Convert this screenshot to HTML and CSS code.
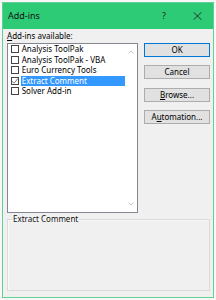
FILE: index.html
```html
<!DOCTYPE html>
<html>
<head>
<meta charset="utf-8">
<link rel="stylesheet" href="styles.css">
</head>
<body>
<div class="dialog">
  <div class="titlebar">
    <span class="title">Add-ins</span>
    <span class="help">?</span>
    <svg class="close" width="9" height="8" viewBox="0 0 9 8"><path d="M0.5 0.2L8.5 7.8M8.5 0.2L0.5 7.8" stroke="#222" stroke-width="0.9" fill="none"/></svg>
  </div>
  <div class="content">
    <div class="top">
      <div class="label"><u>A</u>dd-ins available:</div>
      <div class="listbox">
        <div class="rows">
          <div class="row"><span class="cb"></span><span class="name">Analysis ToolPak</span></div>
          <div class="row"><span class="cb"></span><span class="name">Analysis ToolPak - VBA</span></div>
          <div class="row"><span class="cb"></span><span class="name">Euro Currency Tools</span></div>
          <div class="row"><span class="cb checked"><svg width="8" height="8" viewBox="0 0 8 8"><path d="M1 4.2L3 6.2L7.2 1.2" stroke="#6e6e6e" stroke-width="0.9" fill="none"/></svg></span><span class="name selected">Extract Comment</span></div>
          <div class="row"><span class="cb"></span><span class="name">Solver Add-in</span></div>
        </div>
        <div class="scroll">
          <svg width="6" height="4" viewBox="0 0 6 4"><path d="M0.5 3.5L3 1L5.5 3.5" stroke="#c4c4c4" stroke-width="1" fill="none"/></svg>
          <svg width="6" height="4" viewBox="0 0 6 4"><path d="M0.5 0.5L3 3L5.5 0.5" stroke="#c4c4c4" stroke-width="1" fill="none"/></svg>
        </div>
      </div>
      <div class="buttons">
        <div class="btn default">OK</div>
        <div class="btn">Cancel</div>
        <div class="btn"><u>B</u>rowse...</div>
        <div class="btn">A<u>u</u>tomation...</div>
      </div>
    </div>
    <fieldset class="group"><legend>Extract Comment</legend></fieldset>
  </div>
</div>
</body>
</html>
```

FILE: styles.css
```css
body {
  margin: 0;
  background: #f7f7f7;
  font-family: "Noto Sans", sans-serif;
  font-size: 8px;
  color: #000;
}
.dialog {
  margin: 2px;
  width: 212px;
  height: 296px;
  box-sizing: border-box;
  border: 1px solid #62cf95;
  background: #f0f0f0;
  display: flex;
  flex-direction: column;
}
.titlebar {
  height: 26px;
  flex: none;
  background: #2ecb77;
  display: flex;
  align-items: center;
  padding-left: 5px;
}
.title {
  flex: 1;
  font-size: 9px;
  line-height: 12px;
  color: #111;
}
.help {
  font-size: 9px;
  line-height: 12px;
  color: #222;
  margin-right: 27px;
}
.close {
  margin-right: 11px;
  display: block;
}
.content {
  flex: 1;
  display: flex;
  flex-direction: column;
  padding: 1px 3px 0 4px;
}
.top {
  display: grid;
  grid-template-columns: 131px 66px;
  grid-template-rows: 12px 170px;
  column-gap: 6px;
  row-gap: 1px;
}
.label {
  grid-column: 1 / 3;
  line-height: 12px;
}
.listbox {
  box-sizing: border-box;
  border: 1px solid #828790;
  background: #fff;
  display: flex;
}
.rows {
  flex: 1;
  display: flex;
  flex-direction: column;
}
.row {
  height: 10.5px;
  display: flex;
  align-items: center;
}
.cb {
  box-sizing: border-box;
  width: 8px;
  height: 8px;
  border: 1px solid #444;
  background: #fff;
  margin-left: 3px;
  margin-right: 1.7px;
  display: flex;
  align-items: center;
  justify-content: center;
}
.cb svg {
  display: block;
  flex: none;
}
.name {
  flex: 1;
  line-height: 10px;
  padding-left: 1px;
  white-space: nowrap;
}
.selected {
  background: #3399ff;
  color: #fff;
}
.scroll {
  width: 12px;
  display: flex;
  flex-direction: column;
  justify-content: space-between;
  align-items: center;
  padding: 6px 0;
}
.scroll svg {
  display: block;
}
.buttons {
  display: flex;
  flex-direction: column;
  gap: 8.3px;
}
.btn {
  box-sizing: border-box;
  height: 14px;
  border: 1px solid #adadad;
  background: #e1e1e1;
  text-align: center;
  line-height: 12px;
}
.btn.default {
  border-color: #0078d7;
}
.group {
  margin: 1px 0 0 0;
  padding: 0;
  height: 77px;
  box-sizing: border-box;
  border: 1px solid #dadada;
  box-shadow: inset 1px 1px 0 #fafafa;
  min-inline-size: 0;
}
.group legend {
  margin-left: 4px;
  padding: 0 1px;
  line-height: 10px;
  color: #111;
}
```
